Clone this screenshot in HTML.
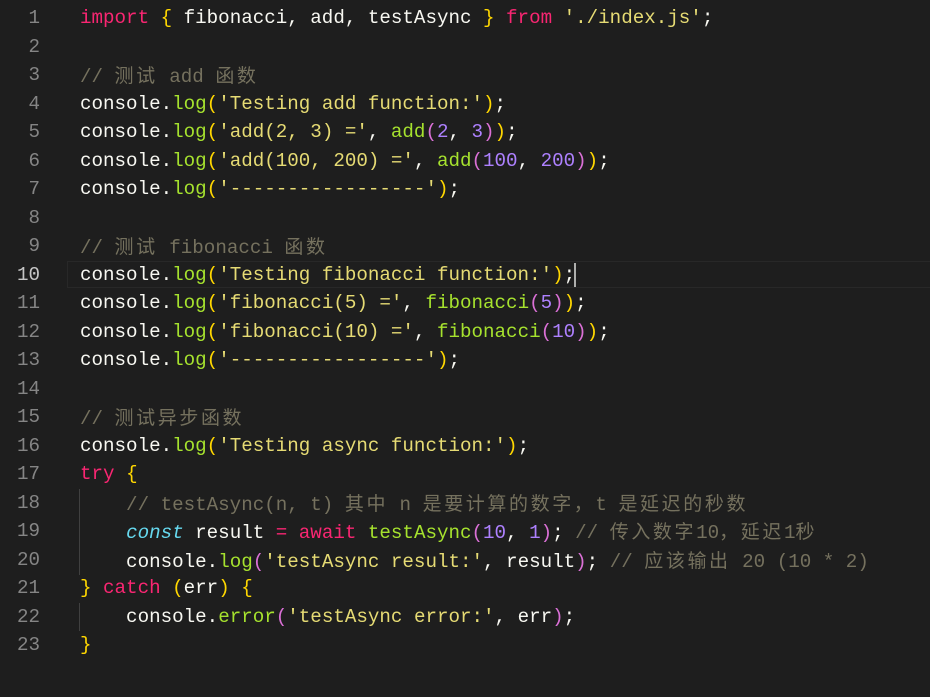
<!DOCTYPE html>
<html><head><meta charset="utf-8"><style>
body{margin:0;background:#1e1e1e;width:930px;height:697px;overflow:hidden;font-family:"Liberation Mono","Noto Sans CJK SC",monospace;font-size:19.2px;color:#f8f8f2}
.l{position:absolute;left:0;height:28.5px;line-height:28.5px;white-space:pre;width:930px}
.n{position:absolute;left:0;width:40px;text-align:right;color:#858585}
.t{position:absolute;left:80px}
.k{color:#f92672}.s{color:#e6db74}.f{color:#a6e22e}.d{color:#ae81ff}.c{color:#75715e}
.y{color:#ffd700}.p{color:#da70d6}.i{color:#66d9ef;font-style:italic}
.h{font-family:"Noto Sans CJK SC",sans-serif;letter-spacing:2.6px;font-size:19px}
.g{position:absolute;left:79px;width:1px;background:#404040}
</style></head><body>
<div style="position:absolute;left:67px;top:261px;width:870px;height:27px;border:1px solid #282828;box-sizing:border-box"></div>
<div style="position:absolute;left:574px;top:263px;width:2px;height:24px;background:#aeafad"></div>
<div class="g" style="top:489px;height:86px"></div>
<div class="g" style="top:603px;height:28px"></div>
<div class="l" style="top:4px"><span class="n">1</span><span class="t"><span class="k">import</span> <span class="y">{</span> fibonacci, add, testAsync <span class="y">}</span> <span class="k">from</span> <span class="s">'./index.js'</span>;</span></div>
<div class="l" style="top:32.5px"><span class="n">2</span></div>
<div class="l" style="top:61px"><span class="n">3</span><span class="t c">// <span class="h">测试</span> add <span class="h">函数</span></span></div>
<div class="l" style="top:89.5px"><span class="n">4</span><span class="t">console.<span class="f">log</span><span class="y">(</span><span class="s">'Testing add function:'</span><span class="y">)</span>;</span></div>
<div class="l" style="top:118px"><span class="n">5</span><span class="t">console.<span class="f">log</span><span class="y">(</span><span class="s">'add(2, 3) ='</span>, <span class="f">add</span><span class="p">(</span><span class="d">2</span>, <span class="d">3</span><span class="p">)</span><span class="y">)</span>;</span></div>
<div class="l" style="top:146.5px"><span class="n">6</span><span class="t">console.<span class="f">log</span><span class="y">(</span><span class="s">'add(100, 200) ='</span>, <span class="f">add</span><span class="p">(</span><span class="d">100</span>, <span class="d">200</span><span class="p">)</span><span class="y">)</span>;</span></div>
<div class="l" style="top:175px"><span class="n">7</span><span class="t">console.<span class="f">log</span><span class="y">(</span><span class="s">'-----------------'</span><span class="y">)</span>;</span></div>
<div class="l" style="top:203.5px"><span class="n">8</span></div>
<div class="l" style="top:232px"><span class="n">9</span><span class="t c">// <span class="h">测试</span> fibonacci <span class="h">函数</span></span></div>
<div class="l" style="top:260.5px"><span class="n" style="color:#c6c6c6">10</span><span class="t">console.<span class="f">log</span><span class="y">(</span><span class="s">'Testing fibonacci function:'</span><span class="y">)</span>;</span></div>
<div class="l" style="top:289px"><span class="n">11</span><span class="t">console.<span class="f">log</span><span class="y">(</span><span class="s">'fibonacci(5) ='</span>, <span class="f">fibonacci</span><span class="p">(</span><span class="d">5</span><span class="p">)</span><span class="y">)</span>;</span></div>
<div class="l" style="top:317.5px"><span class="n">12</span><span class="t">console.<span class="f">log</span><span class="y">(</span><span class="s">'fibonacci(10) ='</span>, <span class="f">fibonacci</span><span class="p">(</span><span class="d">10</span><span class="p">)</span><span class="y">)</span>;</span></div>
<div class="l" style="top:346px"><span class="n">13</span><span class="t">console.<span class="f">log</span><span class="y">(</span><span class="s">'-----------------'</span><span class="y">)</span>;</span></div>
<div class="l" style="top:374.5px"><span class="n">14</span></div>
<div class="l" style="top:403px"><span class="n">15</span><span class="t c">// <span class="h">测试异步函数</span></span></div>
<div class="l" style="top:431.5px"><span class="n">16</span><span class="t">console.<span class="f">log</span><span class="y">(</span><span class="s">'Testing async function:'</span><span class="y">)</span>;</span></div>
<div class="l" style="top:460px"><span class="n">17</span><span class="t"><span class="k">try</span> <span class="y">{</span></span></div>
<div class="l" style="top:488.5px"><span class="n">18</span><span class="t c">    // testAsync(n, t) <span class="h">其中</span> n <span class="h">是要计算的数字，</span>t <span class="h">是延迟的秒数</span></span></div>
<div class="l" style="top:517px"><span class="n">19</span><span class="t">    <span class="i">const</span> result <span class="k">=</span> <span class="k">await</span> <span class="f">testAsync</span><span class="p">(</span><span class="d">10</span>, <span class="d">1</span><span class="p">)</span>; <span class="c">// <span class="h">传入数字</span>10<span class="h">，延迟</span>1<span class="h">秒</span></span></span></div>
<div class="l" style="top:545.5px"><span class="n">20</span><span class="t">    console.<span class="f">log</span><span class="p">(</span><span class="s">'testAsync result:'</span>, result<span class="p">)</span>; <span class="c">// <span class="h">应该输出</span> 20 (10 * 2)</span></span></div>
<div class="l" style="top:574px"><span class="n">21</span><span class="t"><span class="y">}</span> <span class="k">catch</span> <span class="y">(</span>err<span class="y">)</span> <span class="y">{</span></span></div>
<div class="l" style="top:602.5px"><span class="n">22</span><span class="t">    console.<span class="f">error</span><span class="p">(</span><span class="s">'testAsync error:'</span>, err<span class="p">)</span>;</span></div>
<div class="l" style="top:631px"><span class="n">23</span><span class="t"><span class="y">}</span></span></div>
</body></html>
